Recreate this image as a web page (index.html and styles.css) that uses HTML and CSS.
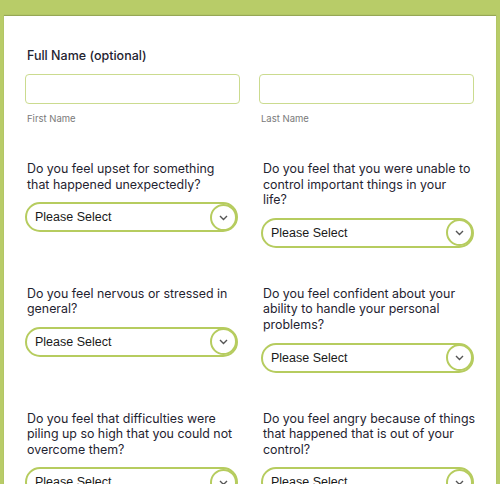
FILE: index.html
```html
<!DOCTYPE html>
<html>
<head>
<meta charset="utf-8">
<link rel="stylesheet" href="styles.css">
</head>
<body>
<div class="card">
  <div class="field">
    <div class="label">Full Name (optional)</div>
    <div class="name-row">
      <div class="name-col">
        <div class="input"></div>
        <div class="sublabel">First Name</div>
      </div>
      <div class="name-col">
        <div class="input"></div>
        <div class="sublabel">Last Name</div>
      </div>
    </div>
  </div>

  <div class="questions">
    <div class="q">
      <div class="q-text">Do you feel upset for something that happened unexpectedly?</div>
      <div class="select"><span>Please Select</span><span class="btn"><svg width="9" height="6" viewBox="0 0 9 6"><path d="M1 1l3.5 3.5L8 1" fill="none" stroke="#555" stroke-width="1.4"/></svg></span></div>
    </div>
    <div class="q">
      <div class="q-text">Do you feel that you were unable to control important things in your<br>life?</div>
      <div class="select"><span>Please Select</span><span class="btn"><svg width="9" height="6" viewBox="0 0 9 6"><path d="M1 1l3.5 3.5L8 1" fill="none" stroke="#555" stroke-width="1.4"/></svg></span></div>
    </div>
    <div class="q">
      <div class="q-text">Do you feel nervous or stressed in general?</div>
      <div class="select"><span>Please Select</span><span class="btn"><svg width="9" height="6" viewBox="0 0 9 6"><path d="M1 1l3.5 3.5L8 1" fill="none" stroke="#555" stroke-width="1.4"/></svg></span></div>
    </div>
    <div class="q">
      <div class="q-text">Do you feel confident about your ability to handle your personal problems?</div>
      <div class="select"><span>Please Select</span><span class="btn"><svg width="9" height="6" viewBox="0 0 9 6"><path d="M1 1l3.5 3.5L8 1" fill="none" stroke="#555" stroke-width="1.4"/></svg></span></div>
    </div>
    <div class="q">
      <div class="q-text">Do you feel that difficulties were piling up so high that you could not overcome them?</div>
      <div class="select"><span>Please Select</span><span class="btn"><svg width="9" height="6" viewBox="0 0 9 6"><path d="M1 1l3.5 3.5L8 1" fill="none" stroke="#555" stroke-width="1.4"/></svg></span></div>
    </div>
    <div class="q">
      <div class="q-text">Do you feel angry because of things that happened that is out of your control?</div>
      <div class="select"><span>Please Select</span><span class="btn"><svg width="9" height="6" viewBox="0 0 9 6"><path d="M1 1l3.5 3.5L8 1" fill="none" stroke="#555" stroke-width="1.4"/></svg></span></div>
    </div>
  </div>
</div>
</body>
</html>
```

FILE: styles.css
```css
html, body {
  margin: 0;
  padding: 0;
  background: #b8cc68;
  height: 100%;
  overflow: hidden;
}

body {
  font-family: Inter, "Noto Sans", sans-serif;
  color: #2c3345;
}

.card {
  margin: 16px 4px 0;
  background: #fff;
  padding: 31px 22px 60px 21px;
  box-shadow: 0 -1px 1px rgba(0, 0, 0, 0.18);
  min-height: 600px;
}

.label {
  font-size: 12.5px;
  font-weight: 500;
  line-height: 18px;
  padding-left: 2px;
  color: #1f2330;
}

.name-row {
  display: grid;
  grid-template-columns: 215px 215px;
  column-gap: 19px;
  margin-top: 9px;
}

.input {
  height: 30px;
  box-sizing: border-box;
  border: 1px solid #cbdb8f;
  border-radius: 4px;
  background: #fff;
}

.sublabel {
  font-size: 9.5px;
  line-height: 14px;
  margin-top: 8px;
  padding-left: 2px;
  color: #7a7a7a;
}

.questions {
  display: grid;
  grid-template-columns: 213px 213px;
  column-gap: 23px;
  row-gap: 38px;
  margin-top: 35px;
}

.q {
  display: flex;
  flex-direction: column;
  align-items: stretch;
}

.q-text {
  font-size: 12.4px;
  line-height: 15.6px;
  padding-left: 2px;
  color: #1f2330;
}

.q:nth-child(even) .q-text {
  margin-right: -4px;
}

.select {
  margin-top: 10px;
  height: 30px;
  box-sizing: border-box;
  border: 2px solid #b6cc5f;
  border-radius: 16px;
  display: flex;
  align-items: center;
  justify-content: space-between;
  padding-left: 8px;
  font-family: "Liberation Sans", Arial, sans-serif;
  font-size: 12.5px;
  color: #1a1a1a;
}

.btn {
  width: 27px;
  height: 27px;
  box-sizing: border-box;
  border: 2px solid #b6cc5f;
  border-radius: 50%;
  background: #fff;
  margin-right: -1px;
  display: flex;
  align-items: center;
  justify-content: center;
  flex-shrink: 0;
}

.btn svg {
  display: block;
  margin-top: 1px;
}
```
